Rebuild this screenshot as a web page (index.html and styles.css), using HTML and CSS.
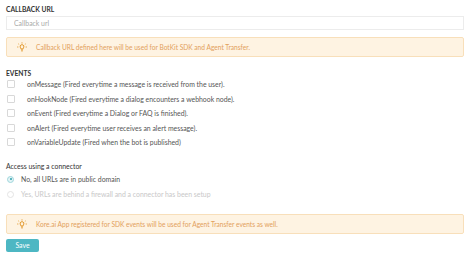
FILE: index.html
```html
<!DOCTYPE html>
<html lang="en">
<head>
    <meta charset="UTF-8">
    <meta name="viewport" content="width=device-width, initial-scale=1.0">
    <title>Callback settings</title>
    <link rel="stylesheet" href="styles.css">
</head>
<body>
    <div class="panel">
        <div class="field">
            <label class="label">CALLBACK URL</label>
            <input type="text" class="url-input" placeholder="Callback url">
        </div>

        <div class="notice">
            <svg class="bulb" viewBox="0 0 12 12" width="10" height="10">
                <path d="M6 3.2a2.3 2.3 0 0 0-1.4 4.1v1.1h2.8V7.3A2.3 2.3 0 0 0 6 3.2z" fill="none" stroke="#e39a2f" stroke-width="1.2"/>
                <path d="M4.9 9.6h2.2M5.2 10.8h1.6" stroke="#e39a2f" stroke-width="1.1"/>
                <path d="M6 0.4v1.4M1.6 2.2l1 0.9M10.4 2.2l-1 0.9M0.2 6h1.4M10.4 6h1.4" stroke="#e39a2f" stroke-width="1.1"/>
            </svg>
            Callback URL defined here will be used for BotKit SDK and Agent Transfer.
        </div>

        <div class="events">
            <div class="label">EVENTS</div>
            <label class="check"><span class="box"></span>onMessage (Fired everytime a message is received from the user).</label>
            <label class="check"><span class="box"></span>onHookNode (Fired everytime a dialog encounters a webhook node).</label>
            <label class="check"><span class="box"></span>onEvent (Fired everytime a Dialog or FAQ is finished).</label>
            <label class="check"><span class="box"></span>onAlert (Fired everytime user receives an alert message).</label>
            <label class="check"><span class="box"></span>onVariableUpdate (Fired when the bot is published)</label>
        </div>

        <div class="connector">
            <div class="sub-label">Access using a connector</div>
            <label class="radio"><span class="dot on"></span>No, all URLs are in public domain</label>
            <label class="radio disabled"><span class="dot"></span>Yes, URLs are behind a firewall and a connector has been setup</label>
        </div>

        <div class="notice notice-low">
            <svg class="bulb" viewBox="0 0 12 12" width="10" height="10">
                <path d="M6 3.2a2.3 2.3 0 0 0-1.4 4.1v1.1h2.8V7.3A2.3 2.3 0 0 0 6 3.2z" fill="none" stroke="#e39a2f" stroke-width="1.2"/>
                <path d="M4.9 9.6h2.2M5.2 10.8h1.6" stroke="#e39a2f" stroke-width="1.1"/>
                <path d="M6 0.4v1.4M1.6 2.2l1 0.9M10.4 2.2l-1 0.9M0.2 6h1.4M10.4 6h1.4" stroke="#e39a2f" stroke-width="1.1"/>
            </svg>
            Kore.ai App registered for SDK events will be used for Agent Transfer events as well.
        </div>

        <button class="save">Save</button>
    </div>
</body>
</html>
```

FILE: styles.css
```css
* {
    box-sizing: border-box;
    margin: 0;
    padding: 0;
}

body {
    font-family: 'Lato', 'Liberation Sans', sans-serif;
    background-color: #fff;
    color: #444;
    font-size: 6.9px;
}

.panel {
    width: 458px;
    margin-left: 6px;
    padding-top: 5px;
}

.label {
    display: block;
    font-weight: bold;
    font-size: 6.7px;
    color: #333;
    line-height: 8px;
}

.url-input {
    display: block;
    width: 100%;
    height: 14px;
    margin-top: 3px;
    border: 1px solid #ececec;
    padding: 0 7px;
    font-family: inherit;
    font-size: 6.9px;
    color: #444;
    outline: none;
}

.url-input::placeholder {
    color: #aaa;
}

.notice {
    display: flex;
    align-items: center;
    height: 20px;
    margin-top: 7px;
    padding-left: 10px;
    background-color: #fef3e2;
    border: 1px solid #f8dfba;
    border-radius: 2px;
    color: #e2a05c;
    font-size: 6.6px;
}

.bulb {
    margin-right: 9px;
}

.events {
    margin-top: 12px;
}

.check {
    display: flex;
    align-items: center;
    height: 14.5px;
    color: #555;
}

.box {
    width: 8px;
    height: 8px;
    border: 1px solid #d8d8d8;
    border-radius: 1px;
    margin-left: 1px;
    margin-right: 12px;
}

.connector {
    margin-top: 12px;
}

.sub-label {
    color: #333;
    line-height: 8px;
    margin-bottom: 2px;
}

.radio {
    display: flex;
    align-items: center;
    height: 15px;
    color: #555;
}

.radio.disabled {
    color: #c8c8c8;
}

.dot {
    width: 7px;
    height: 7px;
    border-radius: 50%;
    border: 1px solid #e4e4e4;
    margin-left: 1px;
    margin-right: 7px;
    position: relative;
}

.dot.on {
    border-color: #9fd6dc;
    background-color: #e3f4f6;
}

.dot.on::after {
    content: '';
    position: absolute;
    left: 1.5px;
    top: 1.5px;
    width: 2px;
    height: 2px;
    border-radius: 50%;
    background-color: #2f9fab;
}

.notice-low {
    margin-top: 12px;
}

.save {
    display: block;
    margin-top: 5px;
    width: 33px;
    height: 13px;
    background-color: #4db7c3;
    color: #fff;
    border: none;
    border-radius: 2px;
    font-family: inherit;
    font-size: 6.9px;
}
```
